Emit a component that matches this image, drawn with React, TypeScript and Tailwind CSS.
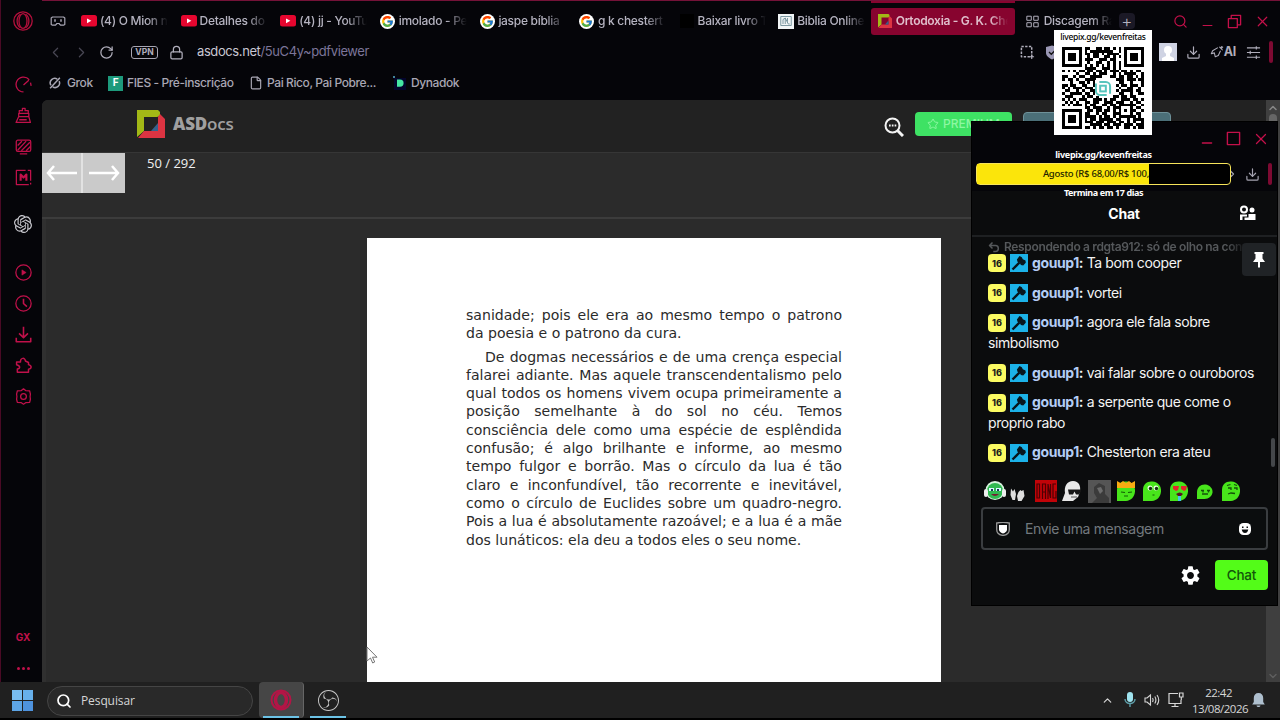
import type { ReactNode } from "react";
import { Star, Download, Lock, RotateCw, ChevronLeft, ChevronRight, ChevronUp, ChevronDown, X, Minus, Search, File } from "lucide-react";
import { FcGoogle } from "react-icons/fc";
import { SiOpenai, SiObsstudio } from "react-icons/si";
import { MdSettings } from "react-icons/md";

const tabs = [
    { icon: "yt", title: "(4) O Mion no" },
    { icon: "yt", title: "Detalhes do" },
    { icon: "yt", title: "(4) jj - YouTu" },
    { icon: "google", title: "imolado - Pe" },
    { icon: "google", title: "jaspe bíblia" },
    { icon: "google", title: "g k chestert" },
    { icon: "black", title: "Baixar livro T" },
    { icon: "bible", title: "Biblia Online" },
];

const messages = [
    "Ta bom cooper",
    "vortei",
    "agora ele fala sobre simbolismo",
    "vai falar sobre o ouroboros",
    "a serpente que come o proprio rabo",
    "Chesterton era ateu",
];

const firstParagraph = ["sanidade; pois ele era ao mesmo tempo o patrono", "da poesia e o patrono da cura."];

const secondParagraph = [
    "De dogmas necessários e de uma crença especial",
    "falarei adiante. Mas aquele transcendentalismo pelo",
    "qual todos os homens vivem ocupa primeiramente a",
    "posição semelhante à do sol no céu. Temos",
    "consciência dele como uma espécie de esplêndida",
    "confusão; é algo brilhante e informe, ao mesmo",
    "tempo fulgor e borrão. Mas o círculo da lua é tão",
    "claro e inconfundível, tão recorrente e inevitável,",
    "como o círculo de Euclides sobre um quadro-negro.",
    "Pois a lua é absolutamente razoável; e a lua é a mãe",
    "dos lunáticos: ela deu a todos eles o seu nome.",
];

const qrRows = [
    "11111110110011011010101111111",
    "10000010101111111100101000001",
    "10111010110110101111001011101",
    "10111010010110011010101011101",
    "10111010111001110110001011101",
    "10000010010011001010101000001",
    "11111110101010101010101111111",
    "00000000111100111010100000000",
    "10101011011011010111011010110",
    "00000100110101110010101111001",
    "11001011001111000110110110101",
    "10110100111100000001110111011",
    "00010011010110000000110010001",
    "11011001100100000001011011101",
    "10101110111000000000100110010",
    "01100101001100000001011110110",
    "10011110110100000000110010011",
    "01110001011010000011011011000",
    "10101011100111010110011101101",
    "01010100110110011101110010110",
    "10101110101100110110111111001",
    "00000000110111001011100010110",
    "11111110011011011010101011001",
    "10000010110010110011100010110",
    "10111010111101011010111111010",
    "10111010101101111101100101111",
    "10111010111011101110110101001",
    "10000010001111011011101110111",
    "11111110110101101101001101011",
];

function Glyph({ size = 16, children }: { size?: number; children: ReactNode }) {
    return (
        <svg width={size} height={size} viewBox="0 0 16 16" fill="none" stroke="currentColor" strokeWidth="1.2" strokeLinejoin="round" className="shrink-0">
            {children}
        </svg>
    );
}

function OperaIcon({ size = 20 }: { size?: number }) {
    return (
        <svg width={size} height={size} viewBox="0 0 20 20" fill="none" stroke="currentColor" strokeWidth="1.3">
            <circle cx="10" cy="10" r="9.2" />
            <ellipse cx="10" cy="10" rx="4" ry="7.4" />
            <path d="M7.5 3.2C3 6 3 14 7.5 16.8M12.5 3.2C17 6 17 14 12.5 16.8" />
        </svg>
    );
}

function TabIcon({ kind }: { kind: string }) {
    if (kind === "yt") {
        return (
            <svg width="16" height="12" viewBox="0 0 16 12" className="shrink-0">
                <rect width="16" height="11.5" rx="2.5" fill="#e6062f" />
                <path d="M6 3.4v4.8L10.4 5.8z" fill="#fff" />
            </svg>
        );
    }
    if (kind === "google") {
        return (
            <span className="flex h-[15px] w-[15px] shrink-0 items-center justify-center rounded-full bg-white">
                <FcGoogle size={13} />
            </span>
        );
    }
    if (kind === "black") return <span className="h-[14px] w-[14px] shrink-0 bg-black" />;
    return (
        <span className="flex h-[15px] w-4 shrink-0 items-center justify-center bg-[#f1f5f6] text-[#6f8f98]">
            <Glyph size={12}>
                <rect x="1" y="2" width="14" height="12" />
                <path d="M4 12V6l3-2v8M7 4l4 8h2M10 4v5" />
            </Glyph>
        </span>
    );
}

function DocsLogo({ size }: { size: number }) {
    return (
        <svg width={size} height={size} viewBox="0 0 28 28" className="shrink-0">
            <path d="M0 0h21l2 2v4l-3 1H7v14l-7 6z" fill="#a3b816" />
            <path d="M23 4l5 5v19H1l6-7h14V7z" fill="#dc3442" />
            <path d="M21 13v8h-7z" fill="#35618c" />
        </svg>
    );
}

function Sidebar() {
    const row = "flex h-[31px] items-center justify-center";
    return (
        <aside className="flex w-[42px] shrink-0 flex-col border-l border-[#4a0a25] bg-[#050509] pl-[3px] text-[#c0114a]">
            <div className="flex h-[42px] items-center justify-center text-[#b3103c]"><OperaIcon /></div>
            <div className={`${row} mt-[27px]`}>
                <Glyph size={17}><path d="M8 15A7 7 0 1 1 13.4 3.5M14.6 6.2l.6 3M8 8.5L13 4" /></Glyph>
            </div>
            <div className={row}>
                <Glyph size={17}><path d="M4 6V3.5h3V1.2h2.5v2.3h3V6M3.5 6h9.500v3H3.500zM3.500 9L1 14.500h13.500L13 9M4 12h7M13 14.500h2" /></Glyph>
            </div>
            <div className={row}>
                <Glyph size={17}>
                    <rect x="1.2" y="2" width="13.6" height="10.5" rx="1.5" />
                    <path d="M2.500 7l4-4M2.500 11.500l8-8.500M6 12l8-8M10.500 12l4-4M4.500 15h7" />
                </Glyph>
            </div>
            <div className={row}>
                <Glyph size={17}>
                    <path d="M10 1.3H1.3v13.4H13M14.700 11V1.300H12M14.700 13v1.500" />
                    <path d="M5.300 11V5.200L8 8l2.700-2.800V11" strokeWidth="2" />
                </Glyph>
            </div>
            <div className={`${row} mt-[15px] text-[#c9c9cf]`}><SiOpenai size={18} /></div>
            <div className={`${row} mt-[18px]`}>
                <Glyph size={17}><circle cx="8" cy="8" r="7.2" /><path d="M6.500 5.500v5L10.500 8z" fill="currentColor" strokeWidth="0.5" /></Glyph>
            </div>
            <div className={row}>
                <Glyph size={17}><circle cx="8" cy="8" r="7.200" /><path d="M8 3.500V8l3.200 3" strokeWidth="1.500" /></Glyph>
            </div>
            <div className={row}>
                <Glyph size={17}><path d="M8 .8v10M3.800 7L8 11l4.200-4M1.200 11v3.800h13.600V11" strokeWidth="1.500" /></Glyph>
            </div>
            <div className={row}>
                <Glyph size={17}><path d="M1.500 4.800h3.700C4.600.3 9.800.3 9.800 3.800l2.900 1.400v2c3.300.8 3.300 3.900 0 4.300v2.800H2.200v-3c3-.3 3-3-.7-4z" strokeWidth="1.400" /></Glyph>
            </div>
            <div className={row}>
                <Glyph size={17}><path d="M8 .8l2 1.600 3.800.3.700 3L14.200 8l.3 2.600-.7 3-3.800.2-2 1.400-2-1.400-3.800-.2-.7-3L1.800 8l-.3-2.300.7-3L6 2.400z" /><circle cx="8" cy="8" r="2.700" /></Glyph>
            </div>
            <div className="flex-1" />
            <div className="flex h-[34px] items-center justify-center text-[10px] font-bold">GX</div>
            <div className="flex h-[28px] items-center justify-center gap-[2px]">
                <span className="h-[3px] w-[3px] rounded-full bg-[#c0114a]" />
                <span className="h-[3px] w-[3px] rounded-full bg-[#c0114a]" />
                <span className="h-[3px] w-[3px] rounded-full bg-[#c0114a]" />
            </div>
        </aside>
    );
}

function TabBar() {
    return (
        <div className="flex h-[41px] items-center border-t border-[#741238] text-xs font-medium tracking-[-0.3px] text-[#b5b3c0]">
            <span className="ml-2 w-[31px] text-[#a9a7b5]">
                <Glyph size={16}><path d="M2.500 4h11l1.300 1v6.500l-1.300.7h-3L9 10.500H7L5.500 12.200h-3l-1.300-.7V5z" /><path d="M5 6.200v2.500M11 6.200v2.500" strokeWidth="1.500" /></Glyph>
            </span>
            {tabs.map((tab) => (
                <div key={tab.title} className="flex w-[99.600px] items-center gap-[3px]">
                    <span className="flex w-4 shrink-0 justify-center"><TabIcon kind={tab.icon} /></span>
                    <span className="w-[68px] overflow-hidden whitespace-nowrap [mask-image:linear-gradient(90deg,#000_70%,transparent)]">{tab.title}</span>
                </div>
            ))}
            <div className="relative -ml-[7px] flex h-[27px] w-[144px] items-center gap-1 rounded-[3px] bg-[#87042f] pl-[7px] text-[#e0bfcc]">
                <span className="absolute -top-[7px] left-0 h-[2px] w-full bg-[#87042f]" />
                <DocsLogo size={14} />
                <span className="w-[112px] overflow-hidden whitespace-nowrap font-semibold [mask-image:linear-gradient(90deg,#000_84%,transparent)]">Ortodoxia - G. K. Che</span>
            </div>
            <div className="ml-[11px] flex w-[93px] items-center gap-[5px]">
                <Glyph size={13}><path d="M1 1.500h5.500v5H1zM9.500 1.500H15v5H9.500zM1 9.500h5.500v5H1zM9.500 9.500H15v5H9.500z" /></Glyph>
                <span className="w-[68px] overflow-hidden whitespace-nowrap [mask-image:linear-gradient(90deg,#000_70%,transparent)]">Discagem Rá</span>
            </div>
            <span className="flex h-4 w-4 items-center justify-center rounded-sm bg-[#1b1926] text-[17px] font-light tracking-normal">+</span>
            <div className="ml-auto flex items-center gap-3 pr-[9px] text-[#c4104a]">
                <Search size={15} strokeWidth={1.9} />
                <Minus size={15} strokeWidth={1.9} className="translate-y-1" />
                <Glyph size={15}><path d="M1.500 5h9.500v9.500H1.500zM4.500 5V1.500h10v10H11" strokeWidth="1.400" /></Glyph>
                <X size={17} strokeWidth={1.7} />
            </div>
        </div>
    );
}

function AddressBar() {
    return (
        <div className="flex h-[22px] items-center text-[#b0aebb]">
            <ChevronLeft size={17} strokeWidth={1.7} className="ml-[5px] text-[#494754]" />
            <ChevronRight size={17} strokeWidth={1.7} className="ml-[9px] text-[#494754]" />
            <RotateCw size={15} strokeWidth={2} className="ml-[9px]" />
            <span className="ml-[17px] flex h-[13px] w-[27px] items-center justify-center rounded-[3px] border border-[#a7a5b2] text-[8.5px] font-bold">VPN</span>
            <Lock size={15} strokeWidth={2} className="ml-[11px]" />
            <span className="ml-[13px] text-[13px] tracking-[-0.4px] text-[#c9c7d3]">asdocs.net<span className="text-[#7c7599]">/5uC4y~pdfviewer</span></span>
            <div className="ml-auto flex items-center">
                <Glyph size={15}><path d="M1.500 1.500h11v11H1.500z" strokeDasharray="2.500 1.500" strokeWidth="1.600" /><path d="M12.500 10v5M10 12.500h5" /></Glyph>
                <svg width="14" height="15" viewBox="0 0 14 15" className="ml-[10px]"><path d="M1 2l6-1.500L13 2v6c0 3-3 5-6 6.500C4 13 1 11 1 8z" fill="#9a97b4" /><path d="M4 7l2.300 2.300L10.500 5" stroke="#111" fill="none" strokeWidth="1.300" /></svg>
                <span className="ml-[100px] flex h-[18px] w-[18px] items-end justify-center bg-[#cfd3e3]">
                    <svg width="14" height="16" viewBox="0 0 14 16" fill="#fff"><circle cx="7" cy="5" r="4" /><path d="M5 8h4v3l4 2v3H1v-3l4-2z" /></svg>
                </span>
                <Download size={15} strokeWidth={1.9} className="ml-[9px]" />
                <span className="ml-[9px] flex items-center text-[12.5px] font-bold tracking-[-0.3px]">
                    <Glyph size={14}><path d="M9 3L3 6.500 1.500 10 5 9l1 4.500L9.500 12 12 6.500M10.500 2l4 4M13.500 1v3M12 2.500h3" /></Glyph>AI
                </span>
                <span className="ml-[10px]"><Glyph size={15}><path d="M1 3h14M1 8h14M1 13h14M11 1.200v3.600M4.500 6.200v3.600M11 11.200v3.600" /></Glyph></span>
                <span className="mr-[7px] ml-[8px] h-[22px] w-[4px] rounded-sm bg-[#7d0a32]" />
            </div>
        </div>
    );
}

function Bookmarks() {
    return (
        <div className="flex h-[37px] items-center pt-[3px] text-xs font-medium tracking-[-0.4px] text-[#a9a7b4]">
            <span className="ml-[7px] flex w-[18px]"><Glyph size={12}><path d="M13.500 5.500A6 6 0 0 1 5 13.200M2.600 11A6 6 0 0 1 11 2.800M1.500 15L14.500 1" strokeWidth="2" /></Glyph></span>
            <span className="w-[41px]">Grok</span>
            <span className="flex h-[15px] w-[15px] items-center justify-center bg-[#1d9a7c] text-[10px] font-bold text-white">F</span>
            <span className="ml-1 w-[123px] whitespace-nowrap">FIES - Pré-inscrição</span>
            <File size={14} strokeWidth={2} className="-ml-px" />
            <span className="ml-[4px] w-[126px] whitespace-nowrap">Pai Rico, Pai Pobre...</span>
            <svg width="14" height="14" viewBox="0 0 14 14"><rect x="1" y="2" width="12" height="12" fill="#04052c" /><path d="M4 3.500h3a3.600 3.600 0 0 1 0 7.200H4z" fill="#45e6a3" /><path d="M0 0h2v2H0z" fill="#42829b" /></svg>
            <span className="ml-[4px]">Dynadok</span>
        </div>
    );
}

function Line({ text, last }: { text: string; last?: boolean }) {
    return <span className={last ? "block whitespace-nowrap" : "block whitespace-nowrap [text-align-last:justify]"}>{text}</span>;
}

function PdfPage() {
    return (
        <article className="ml-[325px] h-[444px] w-[574px] bg-white px-[99px] pt-[68px] font-['DejaVu_Sans'] text-[14.080px] leading-[18.300px] text-[#2b2b2b]">
            <div className="w-[376px]">
                {firstParagraph.map((text, i) => <Line key={text} text={text} last={i === 1} />)}
            </div>
            <div className="mt-[5px] w-[376px]">
                {secondParagraph.map((text, i) => (
                    <div key={text} className={i === 0 ? "pl-[19px]" : ""}><Line text={text} last={i === 10} /></div>
                ))}
            </div>
        </article>
    );
}

function Viewer() {
    return (
        <div className="flex min-h-0 flex-1 overflow-hidden rounded-tl-md bg-[#2b2b2b]">
            <div className="flex-1">
                <header className="flex h-[52px] items-center bg-[#222222] pb-[4px] pl-[95px]">
                    <DocsLogo size={28} />
                    <span className="ml-2 w-[62px] font-['Open_Sans'] text-[17px] font-semibold tracking-[-0.2px] text-[#a0a0a0]"><b className="font-extrabold">ASD</b>ocs</span>
                    <svg width="20" height="20" viewBox="0 0 20 20" fill="none" stroke="#f4f4f4" strokeWidth="2" className="mt-[6px] ml-[649px]">
                        <circle cx="8.500" cy="8.500" r="7" /><path d="M13.500 13.500L19 19" strokeWidth="3" /><path d="M5 8.500h1.700M7.800 8.500h1.700M10.600 8.500h1.700" />
                    </svg>
                    <span className="ml-[11px] flex h-6 w-[97px] items-center gap-1 rounded-sm bg-[#3ee264] pl-3 text-xs font-medium text-[#8df7a2]"><Star size={12} />PREMIUM</span>
                    <span className="ml-[11px] h-6 w-[148px] rounded-sm border border-[#6e9199] bg-[#4b6f78]" />
                </header>
                <div className="flex h-[67px] border-t border-b-2 border-t-[#363636] border-b-[#3c3c3c] font-['Open_Sans'] text-[13px] text-[#f0f0f0]">
                    <span className="flex h-10 w-[41px] items-center justify-center border-r-2 border-[#e2e2e2] bg-[#cacaca] text-white">
                        <svg width="31" height="16" viewBox="0 0 31 16" fill="none" stroke="currentColor" strokeWidth="2.500"><path d="M8 1L2 8l6 7M2 8h29" /></svg>
                    </span>
                    <span className="flex h-10 w-[42px] items-center justify-center bg-[#cacaca] text-white">
                        <svg width="31" height="16" viewBox="0 0 31 16" fill="none" stroke="currentColor" strokeWidth="2.500"><path d="M23 1l6 7-6 7M29 8H0" /></svg>
                    </span>
                    <span className="ml-[22px] pt-px">50 / 292</span>
                </div>
                <div className="h-[463px] border-l-4 border-[#303030] pt-[19px]"><div className="-ml-1"><PdfPage /></div></div>
            </div>
            <div className="flex w-[14px] flex-col items-center justify-between bg-[#3f3f3f] text-[#868686]">
                <div className="flex flex-col items-center">
                    <ChevronUp size={12} strokeWidth={3} className="mt-0.5" />
                    <span className="h-6 w-2 rounded-full bg-[#666]" />
                </div>
                <ChevronDown size={12} strokeWidth={2.5} className="text-[#606060]" />
            </div>
        </div>
    );
}

function Badges() {
    return (
        <span className="mr-1 inline-flex h-[20.500px] items-center gap-[4px] align-top">
            <span className="flex h-[18px] w-[18px] items-center justify-center rounded-sm bg-[#fbfb62] text-[9px] leading-none font-extrabold tracking-normal text-[#1c1c1c]">16</span>
            <svg width="18" height="18" viewBox="0 0 18 18">
                <rect width="18" height="18" fill="#1cb2e8" />
                <path d="M2.500 15.500L9.500 8.500" stroke="#08151c" strokeWidth="2.400" />
                <path d="M9.500 2l2.300 1.300 1 2 2.700 1.200.3 2.300-2.600 2.700-2.300-.4-1-2-2.400-1.300-.6-2.300z" fill="#08151c" />
            </svg>
        </span>
    );
}

// green blob emotes share the same body and differ only in the face
function BlobEmote({ small, children }: { small?: boolean; children: ReactNode }) {
    return (
        <svg width="20" height="22" viewBox="0 0 20 22">
            <path d={small ? "M2 19V12c0-5 4-8 8.500-7.500S18 9 17.500 12.500 14 19 9.500 19z" : "M1 21V10C1 4 5 1 10.500 1.500S19.500 6 19 11.500 15 20.500 10 21z"} fill="#48e51b" />
            {children}
        </svg>
    );
}

function Emotes() {
    return (
        <div className="flex h-[24px] items-center pl-[12px]">
            <svg width="22" height="22" viewBox="0 0 22 22">
                <circle cx="11" cy="10.500" r="9.500" fill="#d8f4df" /><circle cx="11" cy="11" r="8" fill="#30b951" />
                <path d="M5 8h5v3H5zM12 8h5v3h-5z" fill="#d9f9ff" /><path d="M7 9h2v2H7zM13 9h2v2h-2z" fill="#163c50" /><path d="M7 14q4 4 8 0z" fill="#781c34" />
                <rect y="9" width="4" height="8" rx="2" fill="#eee" /><rect x="18" y="9" width="4" height="8" rx="2" fill="#eee" />
            </svg>
            <svg width="17" height="22" viewBox="0 0 17 22" className="ml-[3px]" fill="#dedede">
                <path d="M2 8.500l2 3 1.500-2.500 1.500 5-1 6H3.500L1.500 15zM9.500 12l2-2 1 1 2-1 1 6-3 5H9L8 16z" />
            </svg>
            <svg width="22" height="22" viewBox="0 0 22 22" className="ml-[9px]">
                <rect width="22" height="22" fill="#c10308" />
                <path d="M2 4v14h2.500V4zM7.500 19V4h3v15M8 12h2.500M13 19V4l2.500 14V4M21 4h-3v14h3v-7" fill="none" stroke="#4c0003" strokeWidth="1.200" />
            </svg>
            <svg width="22" height="22" viewBox="0 0 22 22" className="ml-[4px]">
                <path d="M1 21l3-8c-1-7 2-12 8-12s8 5 7 11l-2 5-5 4z" fill="#e8e8e8" /><path d="M7 9.500h13v2l-2 3h-3l-1.500-3-1.500 3H8z" fill="#161616" /><path d="M10 17h6" stroke="#555" />
            </svg>
            <svg width="23" height="23" viewBox="0 0 23 23" className="ml-[5px]">
                <rect width="23" height="23" fill="#555" /><path d="M6 13V7l5-4 6 3v8l4 4v5H4l5-5z" fill="#3b3b3b" /><path d="M9 8l4-1 2 4-3 3z" fill="#6c6c6c" />
            </svg>
            <span className="ml-[5px] flex gap-[6.300px]">
                <BlobEmote><path d="M1 8V1l3.500 2L7 1l3 2 3-2 2.500 2L19 1v7z" fill="#f8ac12" /><path d="M5 12l4 .5M12 12.500l4-.5M8 16h4" stroke="#135c06" strokeWidth="1.200" /></BlobEmote>
                <BlobEmote><circle cx="8" cy="8" r="2.500" fill="#e9ffe0" /><circle cx="14" cy="8" r="2.500" fill="#e9ffe0" /><circle cx="8.500" cy="8.500" r="1.700" fill="#14310e" /><circle cx="14.500" cy="8.500" r="1.700" fill="#14310e" /><path d="M10.500 15h2" stroke="#135c06" /></BlobEmote>
                <BlobEmote><path d="M4 6h6l-1 4-2 1-3-2zM12 6h6l-1 4-2 1-3-2z" fill="#e5242b" /><path d="M7 14q4-3 7 0l-2 2H9z" fill="#5b1220" /><path d="M9 16h3v5H9z" fill="#43c6e8" /></BlobEmote>
                <BlobEmote small><path d="M6 10.500h3M12 10.500h3M7 14h6M8 10v2.500M13.500 10v2.500" fill="none" stroke="#14500a" strokeWidth="1.300" /></BlobEmote>
                <BlobEmote><path d="M6 5.500l3.500-1M13 4.500l3 1M7 8h3v2M13 8h3v2M7 14l3-1 4 .5" fill="none" stroke="#14500a" strokeWidth="1.300" /></BlobEmote>
            </span>
        </div>
    );
}

function ChatWindow() {
    return (
        <section className="absolute top-[121px] left-[971px] flex h-[485px] w-[307px] flex-col border border-black bg-[#0b0c0d]">
            <div className="flex h-[35px] items-center justify-end gap-[11px] bg-[#050509] pr-[7px] pb-0.5 text-[#c4104a]">
                <Minus size={16} strokeWidth={1.9} className="translate-y-1" />
                <Glyph size={15}><path d="M1.500 1.500h13v13h-13z" strokeWidth="1.500" /></Glyph>
                <X size={18} strokeWidth={1.7} />
            </div>
            <div className="flex h-[34px] items-center justify-end bg-[#050509] text-[#a5a3b0]">
                <ChevronRight size={12} strokeWidth={2.5} />
                <Download size={15} strokeWidth={1.9} className="ml-[7px]" />
                <span className="mr-[5px] ml-[8px] h-[22px] w-[4px] rounded-sm bg-[#7d0a32]" />
            </div>
            <div className="flex h-[46px] items-center border-b-2 border-[#1e2022] text-white">
                <h1 className="w-[304px] px-[24px] text-center text-[14px] font-bold tracking-[-0.2px]">Chat</h1>
                <svg width="17" height="16" viewBox="0 0 17 16" className="-ml-[37px] mr-[21px] shrink-0" fill="#fff">
                    <circle cx="5" cy="4.500" r="3" fill="none" stroke="#fff" strokeWidth="2" /><circle cx="13" cy="5" r="2.500" />
                    <path d="M1 9.500h7v2H3.500v3.500H1zM9.500 9h7v6h-7zM5.500 12.500h5V15h-5z" />
                </svg>
            </div>
            <div className="relative h-[242px] overflow-hidden pt-px pr-[22px] pl-[16px]">
                <div className="flex h-[15px] items-center gap-1 pt-0.5 text-xs font-semibold tracking-[-0.35px] text-[#55585b]">
                    <Glyph size={12}><path d="M6 2L2 6l4 4M2 6h8c5 0 5 8 0 8H7" strokeWidth="2" /></Glyph>
                    <span className="w-[242px] overflow-hidden whitespace-nowrap [mask-image:linear-gradient(90deg,#000_92%,transparent)]">Respondendo a rdgta912: só de olho na conv</span>
                </div>
                {messages.map((text) => (
                    <p key={text} className="mb-[9.200px] w-[268px] text-[14px] leading-[20.500px] tracking-[-0.4px] text-[#f4f4f4]">
                        <Badges />
                        <b className="text-[#b3cdf5]">gouup1</b><b>:</b> {text}
                    </p>
                ))}
                <span className="absolute top-[6px] right-[1px] flex h-[33px] w-[34px] items-center justify-center rounded-sm bg-[#202326]">
                    <svg width="12" height="16" viewBox="0 0 12 16" fill="#fff"><path d="M1.500 0h9v2H9.500v4.500L12 10H7v5l-1 1-1-1v-5H0l2.500-3.500V2h-1z" /></svg>
                </span>
                <span className="absolute right-[2px] bottom-[12px] h-[29px] w-[4px] rounded-full bg-[#44474a]" />
            </div>
            <Emotes />
            <div className="mx-[9px] mt-[4px] flex h-[43px] shrink-0 items-center rounded-sm border-2 border-[#3a3d40] bg-[#0b0d0e] px-[13px]">
                <svg width="14" height="14" viewBox="0 0 14 14"><path d="M.7 1Q7-.5 13.300 1v6.500c0 3.500-3 5.500-6.300 6-3.300-.5-6.300-2.500-6.300-6z" fill="none" stroke="#999" strokeWidth="1.300" /><path d="M3 3h8v4.500c0 2-2 3.500-4 4-2-.5-4-2-4-4z" fill="#fff" /></svg>
                <span className="ml-[15px] flex-1 text-[14px] tracking-[-0.35px] text-[#73797e]">Envie uma mensagem</span>
                <svg width="12" height="12" viewBox="0 0 12 12" className="mr-[2px]"><rect width="12" height="12" rx="4.500" fill="#fff" /><path d="M3 3.500h1.500V5H3zM7.500 3.500H9V5H7.500zM2.700 6.500h6.600Q8.500 10 6 10T2.700 6.500z" fill="#0b0d0e" /></svg>
            </div>
            <div className="mt-[10px] flex items-center justify-end gap-[13px] pr-[9px]">
                <MdSettings size={23} className="text-white" />
                <span className="flex h-[30px] w-[53px] items-center justify-center rounded bg-[#53fc18] text-[13.5px] font-medium tracking-[-0.2px] text-[#12560a]">Chat</span>
            </div>
        </section>
    );
}

function DonationOverlay() {
    return (
        <>
            <div className="absolute top-[30px] left-[1054px] flex h-[105px] w-[98px] flex-col items-center bg-white font-['Noto_Sans'] text-black">
                <span className="flex h-[17px] items-center pb-0.5 text-[8.5px] font-medium tracking-[-0.3px] whitespace-nowrap">livepix.gg/kevenfreitas</span>
                <svg width="82" height="82" viewBox="0 0 29 29" shapeRendering="crispEdges">
                    {qrRows.map((cells, y) => cells.split("").map((cell, x) => (cell === "1" ? <rect key={`${x}-${y}`} x={x} y={y} width="1" height="1" /> : null)))}
                    <rect x="11.500" y="11.500" width="6" height="6" fill="#fff" />
                    <g fill="none" stroke="#58c5bd" shapeRendering="auto" strokeWidth="0.700">
                        <path d="M13.200 12.400h2.300a1.500 1.500 0 0 1 1.500 1.500v2.600M15.800 17h-2.300a1.500 1.500 0 0 1-1.500-1.500v-2.600" />
                        <rect x="13.500" y="13.700" width="2" height="2" />
                    </g>
                </svg>
            </div>
            <div className="absolute top-[147px] left-[976px] flex w-[255px] flex-col items-center font-['Noto_Sans'] text-[9px] font-bold tracking-[-0.3px] whitespace-nowrap text-white">
                <span className="flex h-4 items-center">livepix.gg/kevenfreitas</span>
                <div className="flex h-[22px] w-full rounded-sm border border-[#f7e45a] bg-black">
                    <span className="flex w-[172px] items-center justify-end bg-[#fbe50b] text-[9.5px] font-medium tracking-[-0.25px] text-[#231f00]">Agosto (R$ 68,00/R$ 100,</span>
                </div>
                <span className="flex h-[15px] items-center tracking-[-0.4px]">Termina em 17 dias</span>
            </div>
        </>
    );
}

function Taskbar() {
    return (
        <footer className="flex h-[38px] items-center border-b-2 border-black bg-[#202020] font-['Open_Sans'] text-xs text-[#d6d6d6]">
            <div className="ml-[12px] grid grid-cols-2 gap-px">
                <span className="h-[10px] w-[10px] bg-[#78bdf1]" />
                <span className="h-[10px] w-[10px] bg-[#67b0eb]" />
                <span className="h-[10px] w-[10px] bg-[#5da5e6]" />
                <span className="h-[10px] w-[10px] bg-[#4e93de]" />
            </div>
            <div className="mt-px ml-[14px] flex h-[30px] w-[206px] items-center rounded-full border border-[#454545] bg-[#292929] pl-[8px]">
                <Search size={16} strokeWidth={2.6} className="text-white" />
                <span className="ml-[9px] pt-px tracking-[-0.1px]">Pesquisar</span>
            </div>
            <div className="ml-[6px] flex h-full w-[45px] flex-col items-center justify-between rounded-sm border-r border-[#666] bg-[#464646] text-[#b31546]">
                <span className="mt-[7px]"><svg width="22" height="22" viewBox="0 0 22 22" fill="none" stroke="currentColor"><circle cx="11" cy="11" r="9.500" strokeWidth="2" /><ellipse cx="11" cy="11" rx="5.500" ry="7.500" strokeWidth="3.500" /></svg></span>
                <span className="h-[2px] w-[36px] bg-[#6cc3e6]" />
            </div>
            <div className="ml-[6px] flex h-full w-[36px] flex-col items-center justify-between text-[#c8c8c8]">
                <SiObsstudio size={21} className="mt-[8px]" />
                <span className="h-[2px] w-[36px] bg-[#6cc3e6]" />
            </div>
            <div className="ml-auto flex items-center pr-[15px]">
                <ChevronUp size={13} strokeWidth={2.200} />
                <svg width="12" height="16" viewBox="0 0 12 16" className="ml-[10px]"><rect x="3" width="6" height="10" rx="3" fill="#9fe3ee" /><path d="M1 7c0 6 10 6 10 0M6 11.500V15" fill="none" stroke="#5e9faa" strokeWidth="1.400" /></svg>
                <svg width="16" height="14" viewBox="0 0 16 14" className="ml-[8px]" fill="none" stroke="currentColor" strokeWidth="1.100"><path d="M1 5h2l3.500-3v10L3 9H1zM8.500 5q1.200 2 0 4M10.800 3.500q2.200 3.500 0 7M13 2q3.500 5 0 10" /></svg>
                <svg width="16" height="16" viewBox="0 0 16 16" className="ml-[8px]" fill="none" stroke="currentColor" strokeWidth="1.200"><path d="M10 1.500H1v10h12V8M7 11.500v3M3.500 14.500h7M11.500 1h3.500v4h-3.500zM13.300 5v3" /></svg>
                <div className="ml-[8px] w-[54px] pt-px text-right text-[11.5px] leading-[16px] tracking-[-0.5px] whitespace-nowrap">
                    <div className="pr-[14px]">22:42</div>
                    <div>13/08/2026</div>
                </div>
                <svg width="13" height="15" viewBox="0 0 13 15" className="ml-[6px]" fill="#aebfce"><path d="M6.500 0c3 0 4.700 2 4.700 5v4l1.600 2.500H.2L1.800 9V5c0-3 1.700-5 4.700-5zM4.500 12.500h4c-.5 2-3.500 2-4 0z" /></svg>
            </div>
        </footer>
    );
}

export default function App() {
    return (
        <div className="relative flex h-[720px] w-[1280px] flex-col overflow-hidden bg-[#050509] font-['Inter',sans-serif]">
            <main className="flex h-[682px]">
                <Sidebar />
                <div className="flex min-w-0 flex-1 flex-col">
                    <TabBar />
                    <AddressBar />
                    <Bookmarks />
                    <Viewer />
                </div>
            </main>
            <Taskbar />
            <ChatWindow />
            <DonationOverlay />
            <svg width="12" height="18" viewBox="0 0 12 18" className="absolute top-[646px] left-[366px]"><path d="M1 1v14l3.500-3 2.200 5 2-1-2.200-4.800H11z" fill="#fff" stroke="#777" /></svg>
        </div>
    );
}
